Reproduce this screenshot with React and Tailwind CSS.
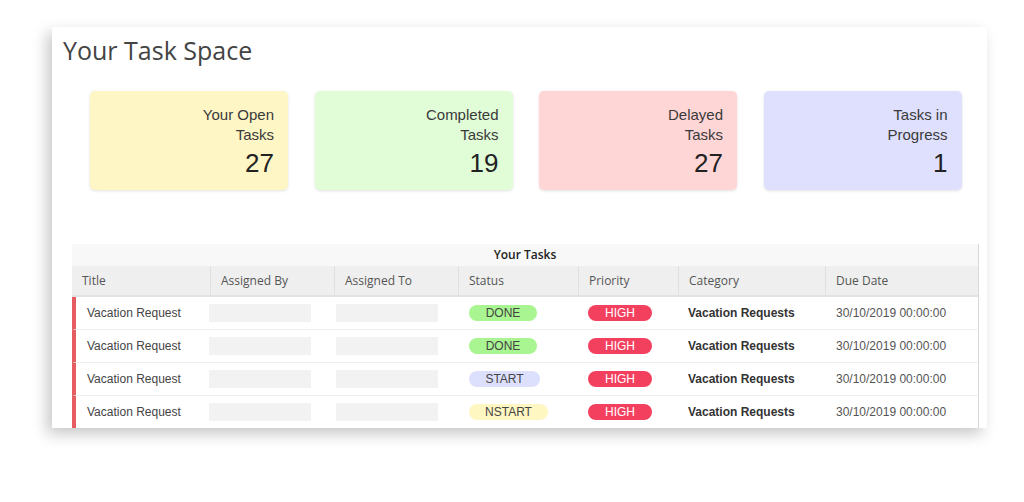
import React from 'react';

const stats = [
  { label: ['Your Open', 'Tasks'], value: 27, bg: 'bg-[#fff6c6]' },
  { label: ['Completed', 'Tasks'], value: 19, bg: 'bg-[#e1fdd8]' },
  { label: ['Delayed', 'Tasks'], value: 27, bg: 'bg-[#ffd6d6]' },
  { label: ['Tasks in', 'Progress'], value: 1, bg: 'bg-[#dee0fe]' },
];

const rows = [
  { status: 'DONE', statusClass: 'bg-[#a9f591] w-[68px]' },
  { status: 'DONE', statusClass: 'bg-[#a9f591] w-[68px]' },
  { status: 'START', statusClass: 'bg-[#dde0fc] w-[71px]' },
  { status: 'NSTART', statusClass: 'bg-[#fff7c2] w-[79px]' },
];

const headers = ['Title', 'Assigned By', 'Assigned To', 'Status', 'Priority', 'Category', 'Due Date'];

function StatCard({ stat }) {
  return (
    <div
      className={`${stat.bg} w-[198px] h-[99px] rounded-[5px] shadow-[0_1px_3px_rgba(0,0,0,0.12)] flex flex-col items-end pt-[14px] pr-[14px] text-right font-['Liberation_Sans',Arial,sans-serif] text-[#3a3a3a]`}
    >
      <div className="text-[15px] leading-[20px]">{stat.label[0]}</div>
      <div className="text-[15px] leading-[20px]">{stat.label[1]}</div>
      <div className="text-[26px] leading-[30px] text-[#222] mt-[3px]">{stat.value}</div>
    </div>
  );
}

export default function App() {
  return (
    <div className="w-[1024px] h-[502px] bg-white overflow-hidden pt-[27px] pl-[52px]">
      <div className="w-[935px] h-[401px] bg-white overflow-hidden shadow-[-5px_6px_14px_rgba(0,0,0,0.22)]">
        <h1 className="font-['Open_Sans',sans-serif] text-[25px] leading-[36px] text-[#444] pl-[11px] pt-[5px]">
          Your Task Space
        </h1>
        <div className="flex gap-[26.5px] pl-[38px] mt-[23px]">
          {stats.map((s, i) => (
            <StatCard key={i} stat={s} />
          ))}
        </div>
        <div className="ml-[20px] mt-[54px] w-[907px] border-r border-[#d8d8d8]">
          <div className="h-[22px] bg-[#f8f8f8] text-center font-['Open_Sans',sans-serif] font-semibold text-[12px] leading-[22px] text-[#222]">
            Your Tasks
          </div>
          <div className="grid grid-cols-[139px_124px_124px_120px_100px_147px_152px] h-[31px] bg-[#efefef] border-b-2 border-[#e2e2e2] font-['Open_Sans',sans-serif] text-[12px] text-[#555]">
            {headers.map((h, i) => (
              <div
                key={h}
                className={`flex items-center pl-[10px] ${i < headers.length - 1 ? 'border-r border-[#e0e0e0]' : ''}`}
              >
                {h}
              </div>
            ))}
          </div>
          {rows.map((r, i) => (
            <div
              key={i}
              className="grid grid-cols-[133px_127px_123px_120px_100px_147px_152px] h-[33px] border-l-4 border-[#e65c61] border-b border-b-[#efefef] items-center font-['Liberation_Sans',Arial,sans-serif] text-[12px] text-[#444]"
            >
              <div className="pl-[11px]">Vacation Request</div>
              <div>
                <div className="w-[102px] h-[18px] bg-[#f2f2f2]" />
              </div>
              <div>
                <div className="w-[102px] h-[18px] bg-[#f2f2f2]" />
              </div>
              <div className="pl-[10px]">
                <div className={`${r.statusClass} h-[16px] rounded-full flex items-center justify-center text-[#444] text-[12px]`}>
                  {r.status}
                </div>
              </div>
              <div className="pl-[9px]">
                <div className="w-[64px] h-[16px] rounded-full bg-[#f4405f] flex items-center justify-center text-white text-[12px]">
                  HIGH
                </div>
              </div>
              <div className="pl-[9px] font-bold text-[#333]">Vacation Requests</div>
              <div className="pl-[10px] text-[#555]">30/10/2019 00:00:00</div>
            </div>
          ))}
        </div>
      </div>
    </div>
  );
}
